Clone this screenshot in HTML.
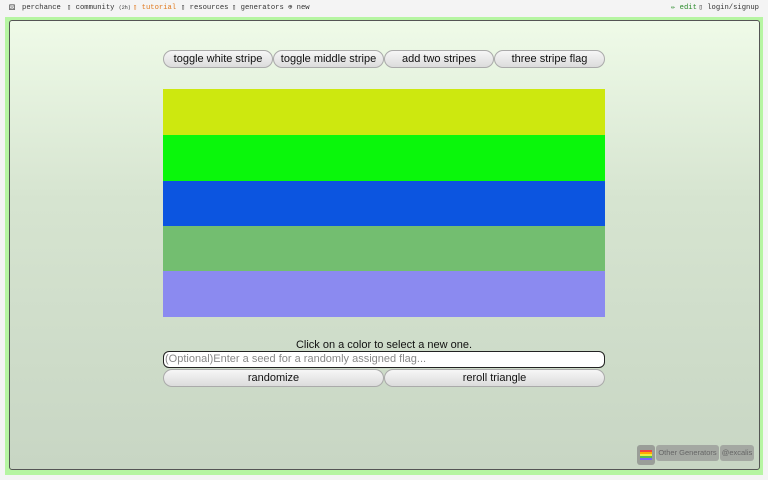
<!DOCTYPE html>
<html><head><style>
body{margin:0;width:768px;height:480px;background:#f4f4f4;font-family:"Liberation Sans",sans-serif;position:relative;overflow:hidden}
.top{position:absolute;left:0;top:0;width:768px;height:17px;font-family:"Liberation Mono",monospace;font-size:7.2px;color:#333;line-height:17px;white-space:nowrap}
.top span{position:absolute;top:0;white-space:nowrap}
.green{position:absolute;left:5px;top:17px;width:758px;height:458px;background:#b6f5a2}
.panel{position:absolute;left:9px;top:20px;width:749px;height:448px;border:1px solid #555;border-radius:3px;background:linear-gradient(#effbe8,#d6e4d0 40%,#c8d6c4)}
.btn{position:absolute;height:18px;border:1px solid #aaa;border-radius:9px;background:linear-gradient(#f6f6f6,#dcdcdc);font-size:11px;color:#111;text-align:center;line-height:17px;box-sizing:border-box}
.s{position:absolute;left:163px;width:442px}
</style></head><body>
<div class="top">
<span style="left:9px;font-size:10px">⚄</span>
<span style="left:22px">perchance</span>
<span style="left:67px">▯ community <small style="font-size:5px">(2h)</small></span>
<span style="left:133px;color:#e07a20">▯ tutorial</span>
<span style="left:181px">▯ resources</span>
<span style="left:232px">▯ generators</span>
<span style="left:288px">⊕ new</span>
<span style="left:671px;color:#2a8a2a">✏ edit</span>
<span style="right:9px">▯ login/signup</span>
</div>
<div class="green"></div>
<div class="panel"></div>
<div class="btn" style="left:163px;top:50px;width:110px">toggle white stripe</div>
<div class="btn" style="left:273px;top:50px;width:111px">toggle middle stripe</div>
<div class="btn" style="left:384px;top:50px;width:110px">add two stripes</div>
<div class="btn" style="left:494px;top:50px;width:111px">three stripe flag</div>
<div class="s" style="top:89px;height:46px;background:#cde80f"></div>
<div class="s" style="top:135px;height:46px;background:#0af70b"></div>
<div class="s" style="top:181px;height:45px;background:#0c55e0"></div>
<div class="s" style="top:226px;height:45px;background:#73be70"></div>
<div class="s" style="top:271px;height:46px;background:#8b8af0"></div>
<div style="position:absolute;left:163px;width:442px;top:339px;text-align:center;font-size:11px;color:#111">Click on a color to select a new one.</div>
<div style="position:absolute;left:163px;top:351px;width:442px;height:17px;box-sizing:border-box;border:1.5px solid #222;border-radius:6px;background:#fff;font-size:11px;color:#888;line-height:14px;padding-left:1px">(Optional)Enter a seed for a randomly assigned flag...</div>
<div class="btn" style="left:163px;top:369px;width:221px">randomize</div>
<div class="btn" style="left:384px;top:369px;width:221px">reroll triangle</div>
<div style="position:absolute;left:637px;top:445px;width:18px;height:20px;background:#9a9e98;border-radius:3px"><div style="margin:5px 3px;height:10px;background:linear-gradient(#e44 0 20%,#fa0 20% 40%,#ee4 40% 60%,#5b5 60% 80%,#76f 80%)"></div></div>
<div style="position:absolute;left:656px;top:445px;width:63px;height:16px;background:#a4a8a2;border-radius:3px;font-size:7.5px;color:#666;line-height:16px;text-align:center">Other Generators</div>
<div style="position:absolute;left:720px;top:445px;width:34px;height:16px;background:#a4a8a2;border-radius:3px;font-size:7.5px;color:#666;line-height:16px;text-align:center">@excalis</div>
</body></html>
